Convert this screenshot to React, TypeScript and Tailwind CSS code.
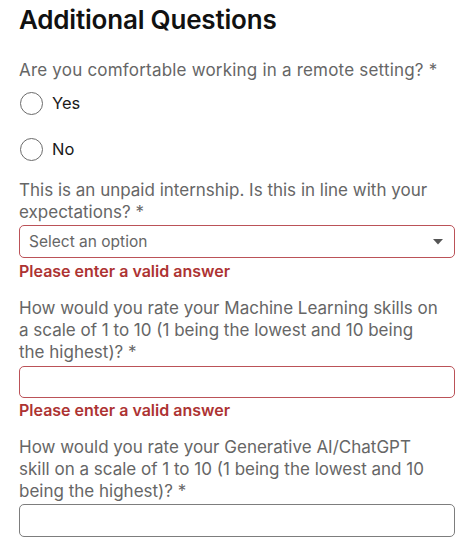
import React from "react";

function Radio({ label }: { label: string }) {
  return (
    <label className="flex items-center gap-[9px] h-[23px] pl-[1px]">
      <span className="block w-[23px] h-[23px] rounded-full border-[1.5px] border-[#6b6b6b] bg-white" />
      <span className="text-[16.5px] text-[#1a1a1a]">{label}</span>
    </label>
  );
}

function ErrorText({ className }: { className: string }) {
  return (
    <p className={`text-[16px] leading-[22px] font-semibold text-[#ad3333] ${className}`}>
      Please enter a valid answer
    </p>
  );
}

export default function App() {
  return (
    <div
      className="w-[474px] h-[549px] bg-white overflow-hidden pl-[19px] pr-[19px]"
      style={{ fontFamily: "Inter, 'Noto Sans', sans-serif" }}
    >
      <h1 className="text-[26px] leading-[30px] font-semibold text-[#111] tracking-[-0.2px] pt-[5px]">
        Additional Questions
      </h1>

      <p className="mt-[24px] text-[17px] leading-[22px] text-[#666666] tracking-[0.2px]">
        Are you comfortable working in a remote setting? *
      </p>
      <div className="mt-[11px] flex flex-col gap-[23px]">
        <Radio label="Yes" />
        <Radio label="No" />
      </div>

      <p className="mt-[18px] text-[17px] leading-[22px] text-[#666666]">
        This is an unpaid internship. Is this in line with your expectations? *
      </p>
      <div className="mt-[2px] h-[33px] rounded-[5px] border border-[#bb5258] flex items-center justify-between pl-[9px] pr-[11px]">
        <span className="text-[15.5px] text-[#666666]">Select an option</span>
        <svg width="10" height="6" viewBox="0 0 10 6">
          <path d="M0 0 H10 L5 5.5 Z" fill="#555" />
        </svg>
      </div>
      <ErrorText className="mt-[2px]" />

      <p className="mt-[15px] text-[17px] leading-[22px] text-[#666666]">
        How would you rate your Machine Learning skills on
        <br />
        a scale of 1 to 10 (1 being the lowest and 10 being
        <br />
        the highest)? *
      </p>
      <div className="mt-[3px] h-[32px] rounded-[5px] border border-[#bb5258]" />
      <ErrorText className="mt-[1px]" />

      <p className="mt-[15px] text-[17px] leading-[22px] text-[#666666]">
        How would you rate your Generative AI/ChatGPT
        <br />
        skill on a scale of 1 to 10 (1 being the lowest and 10 being the highest)? *
      </p>
      <div className="mt-[2px] h-[33px] rounded-[5px] border border-[#7d7d7d]" />
    </div>
  );
}
